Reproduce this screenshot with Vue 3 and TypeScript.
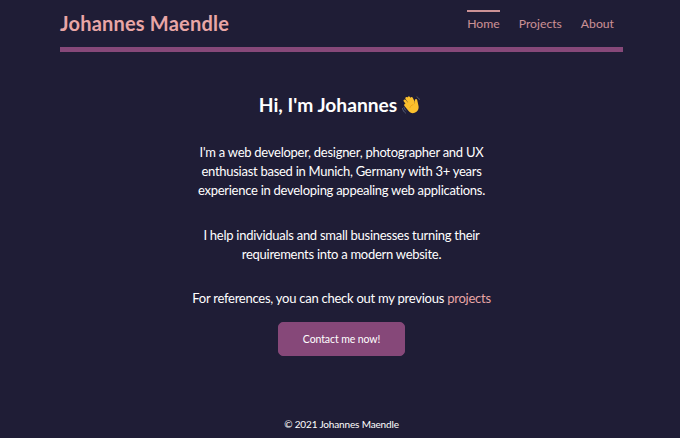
<template>
  <div class="page">
    <header class="header">
      <a class="brand">Johannes Maendle</a>
      <nav class="nav">
        <a v-for="link in links" :key="link" class="nav-link" :class="{ active: link === 'Home' }">{{ link }}</a>
      </nav>
    </header>

    <main class="main">
      <h1 class="title">
        Hi, I'm Johannes
        <svg class="wave" viewBox="0 0 20 20" aria-hidden="true">
          <path d="M1.500 13.500c.3 1.800 1.300 3.300 3 4.500M3 12.500c.3 1.200.9 2.200 2 3" fill="none" stroke="#56607a" stroke-width="1" stroke-linecap="round" />
          <path d="M16 2c1 .4 1.800 1.200 2.300 2.300" fill="none" stroke="#56607a" stroke-width="1" stroke-linecap="round" />
          <g fill="none" stroke="#fbc02d" stroke-width="2.600" stroke-linecap="round">
            <path d="M6 8.500 3.800 5.800M8.300 7 5.600 3.300M10.500 6.500 7.800 2.700M12.500 7 10.600 3.400" />
          </g>
          <path d="M4.500 8.500 11 5.500l2.500 3 .4-3.500c.2-1.500 2-1.500 2.300 0l1.300 6c.6 3-1 5.800-3.800 6.800-2.500.9-4.800-.1-6.300-2L3.500 11c-.9-1.200 0-2.200 1-2.500Z" fill="#fbc02d" />
          <path d="M9 12.500c.4-1.400 1.500-2.400 3-2.800" fill="none" stroke="#e89a10" stroke-width=".7" stroke-linecap="round" />
        </svg>
      </h1>
      <p class="copy">I'm a web developer, designer, photographer and UX<br />enthusiast based in Munich, Germany with 3+ years<br />experience in developing appealing web applications.</p>
      <p class="copy">I help individuals and small businesses turning their<br />requirements into a modern website.</p>
      <p class="copy refs">For references, you can check out my previous <a class="inline-link">projects</a></p>
      <button class="cta" type="button">Contact me now!</button>
    </main>

    <footer class="footer">© 2021 Johannes Maendle</footer>
  </div>
</template>

<script setup lang="ts">
const links: string[] = ['Home', 'Projects', 'About']
</script>

<style scoped>
.page {
  display: flex;
  flex-direction: column;
  height: 438px;
  padding: 0 57px 0 60px;
  box-sizing: border-box;
  overflow: hidden;
  background: #1f1d36;
  color: #fff;
  font-family: Lato, "Open Sans", sans-serif;
}

.header {
  display: flex;
  align-items: flex-end;
  justify-content: space-between;
  height: 52px;
  box-sizing: border-box;
  border-bottom: 5px solid #864879;
}

.brand {
  margin-bottom: 12px;
  color: #e9a6a6;
  font-size: 20px;
  font-weight: 700;
  line-height: 24px;
  letter-spacing: 0.2px;
}

.nav {
  display: flex;
  align-self: stretch;
  gap: 19px;
  margin-right: 9px;
  padding-top: 10px;
}

.nav-link {
  height: 19px;
  padding-top: 4px;
  border-top: 2px solid transparent;
  color: #e9a6a6;
  font-size: 12.200px;
  line-height: 15px;
  opacity: 0.85;
}
.nav-link.active { border-top-color: #e9a6a6; }

.main {
  display: flex;
  flex-direction: column;
  align-items: center;
  text-align: center;
}

.title {
  display: flex;
  align-items: center;
  gap: 4px;
  margin: 41px 3px 26px 0;
  font-size: 19.200px;
  font-weight: 700;
  line-height: 24px;
}

.wave { width: 20px; height: 20px; }

.copy {
  margin: 0 0 25.500px;
  font-size: 13px;
  line-height: 19px;
  letter-spacing: -0.27px;
}
.copy.refs { margin-bottom: 14px; letter-spacing: -0.25px; }

.inline-link { color: #e9a6a6; }

.cta {
  width: 127px;
  height: 34px;
  padding: 0;
  border: 1px solid #864879;
  border-radius: 5px;
  background: #864879;
  color: #fff;
  font-family: inherit;
  font-size: 10.500px;
  letter-spacing: -0.1px;
}

.footer {
  margin-top: auto;
  padding-bottom: 7px;
  font-size: 10px;
  line-height: 14px;
  letter-spacing: -0.15px;
  text-align: center;
}
</style>

<style>
body { background: #1f1d36; }
</style>
